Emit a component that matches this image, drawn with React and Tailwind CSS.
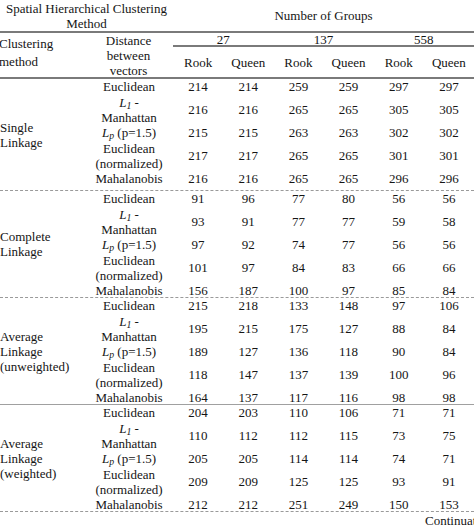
import React from "react";

const L1 = () => (
  <span>
    <i>L</i>
    <sub>
      <i>1</i>
    </sub>{" "}
    -
  </span>
);
const Lp = () => (
  <span>
    <i>L</i>
    <sub>
      <i>p</i>
    </sub>{" "}
    (p=1.5)
  </span>
);

const distances = [
  [<span>Euclidean</span>],
  [<L1 />, <span>Manhattan</span>],
  [<Lp />],
  [<span>Euclidean</span>, <span>(normalized)</span>],
  [<span>Mahalanobis</span>],
];

const groups = [
  {
    label: ["Single", "Linkage"],
    h: "h-[112px]",
    border: "border-b border-dashed border-[#9a9a9a]",
    rows: [
      [214, 214, 259, 259, 297, 297],
      [216, 216, 265, 265, 305, 305],
      [215, 215, 263, 263, 302, 302],
      [217, 217, 265, 265, 301, 301],
      [216, 216, 265, 265, 296, 296],
    ],
  },
  {
    label: ["Complete", "Linkage"],
    h: "h-[107px]",
    border: "border-b border-dashed border-[#9a9a9a]",
    rows: [
      [91, 96, 77, 80, 56, 56],
      [93, 91, 77, 77, 59, 58],
      [97, 92, 74, 77, 56, 56],
      [101, 97, 84, 83, 66, 66],
      [156, 187, 100, 97, 85, 84],
    ],
  },
  {
    label: ["Average", "Linkage", "(unweighted)"],
    h: "h-[107px]",
    border: "border-b border-solid border-[#a0a0a0]",
    rows: [
      [215, 218, 133, 148, 97, 106],
      [195, 215, 175, 127, 88, 84],
      [189, 127, 136, 118, 90, 84],
      [118, 147, 137, 139, 100, 96],
      [164, 137, 117, 116, 98, 98],
    ],
  },
  {
    label: ["Average", "Linkage", "(weighted)"],
    h: "h-[107px]",
    border: "border-b border-dashed border-[#9a9a9a]",
    rows: [
      [204, 203, 110, 106, 71, 71],
      [110, 112, 112, 115, 73, 75],
      [205, 205, 114, 114, 74, 71],
      [209, 209, 125, 125, 93, 91],
      [212, 212, 251, 249, 150, 153],
    ],
  },
];

export default function App() {
  return (
    <div className="w-[474px] h-[528px] overflow-hidden bg-white text-[#151515] font-['Liberation_Serif',serif] text-[13px] leading-[15px]">
      {/* header row 1 */}
      <div className="flex h-[33px] border-b-2 border-[#7a7a7a]">
        <div className="w-[173px] text-center pt-[1px]">
          <div>Spatial Hierarchical Clustering</div>
          <div>Method</div>
        </div>
        <div className="flex-1 flex items-center justify-center">Number of Groups</div>
      </div>
      {/* header row 2 */}
      <div className="flex h-[46px] border-b-2 border-[#7a7a7a]">
        <div className="w-[85px] pt-[2px] leading-[18px] -ml-[1px]">
          <div>Clustering</div>
          <div>method</div>
        </div>
        <div className="w-[89px] flex flex-col items-center justify-center text-center">
          <div>Distance</div>
          <div>between</div>
          <div>vectors</div>
        </div>
        <div className="flex-1 flex flex-col">
          <div className="h-[14px] border-b-2 border-[#7a7a7a] grid grid-cols-3 text-center">
            <div className="-mt-[1px]">27</div>
            <div className="-mt-[1px]">137</div>
            <div className="-mt-[1px]">558</div>
          </div>
          <div className="flex-1 grid grid-cols-6 items-center text-center">
            <div>Rook</div>
            <div>Queen</div>
            <div>Rook</div>
            <div>Queen</div>
            <div>Rook</div>
            <div>Queen</div>
          </div>
        </div>
      </div>
      {groups.map((g, gi) => (
        <div key={gi} className={`flex ${g.h} ${g.border}`}>
          <div className="w-[85px] flex flex-col justify-center">
            {g.label.map((t, i) => (
              <div key={i}>{t}</div>
            ))}
          </div>
          <div className="flex-1 -mt-[4px]">
            {g.rows.map((r, ri) => (
              <div key={ri} className="h-[23px] flex items-center">
                <div className="w-[88px] flex flex-col items-center text-center">
                  {distances[ri].map((d, di) => (
                    <div key={di} className="whitespace-nowrap">
                      {d}
                    </div>
                  ))}
                </div>
                <div className="flex-1 grid grid-cols-6 text-center">
                  {r.map((v, vi) => (
                    <div key={vi}>{v}</div>
                  ))}
                </div>
              </div>
            ))}
          </div>
        </div>
      ))}
      <div className="pl-[425px] pt-[1px] whitespace-nowrap">Continuation</div>
    </div>
  );
}
